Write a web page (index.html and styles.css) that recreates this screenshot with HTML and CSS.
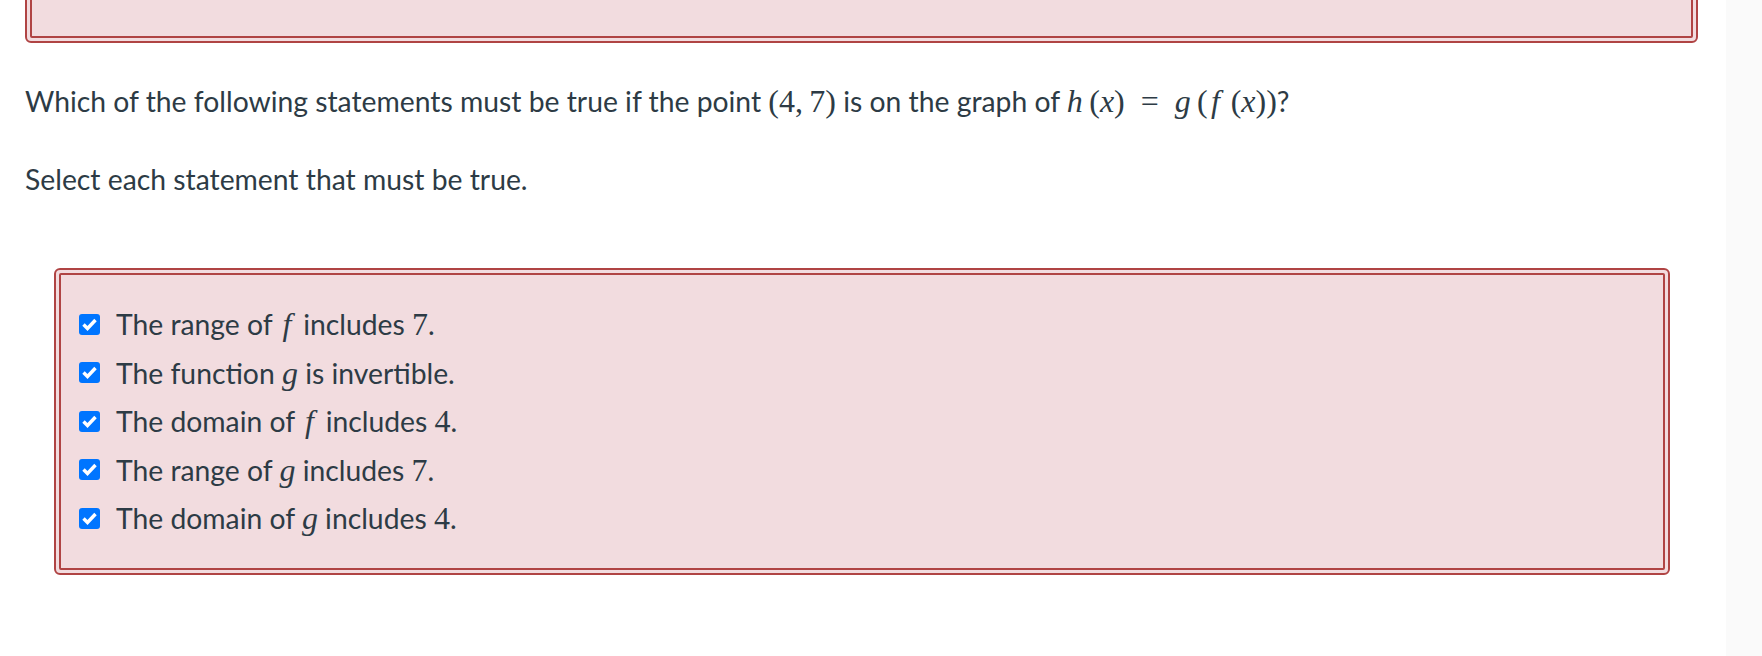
FILE: index.html
```html
<!DOCTYPE html>
<html lang="en">
<head>
    <meta charset="UTF-8">
    <meta name="viewport" content="width=device-width, initial-scale=1.0">
    <title>Question</title>
    <link rel="stylesheet" href="styles.css">
</head>
<body>
    <div class="layout">
        <div class="main">
            <!-- Caixa do enunciado anterior (cortada no topo) -->
            <div class="answer-box answer-box-top">
                <div class="answer-inner"></div>
            </div>

            <p class="question">Which of the following statements must be true if the point <span class="math">(4,&thinsp;7)</span> is on the graph of <span class="math"><i>h</i>&thinsp;(<i>x</i>)&ensp;=&ensp;<i>g</i>&thinsp;(<i class="fi">f</i>&thinsp;(<i>x</i>))</span>?</p>
            <p class="question">Select each statement that must be true.</p>

            <div class="answer-box answer-box-options">
                <div class="answer-inner">
                    <ul class="options">
                        <li class="option">
                            <span class="check"><svg viewBox="0 0 21 21" width="21" height="21"><path d="M4.5 10.5 L8.5 14.5 L16.5 6" /></svg></span>
                            <span class="label">The range of <span class="math"><i class="fi">f</i></span>&nbsp;includes <span class="math">7</span>.</span>
                        </li>
                        <li class="option">
                            <span class="check"><svg viewBox="0 0 21 21" width="21" height="21"><path d="M4.5 10.5 L8.5 14.5 L16.5 6" /></svg></span>
                            <span class="label">The function <span class="math"><i>g</i></span> is invertible.</span>
                        </li>
                        <li class="option">
                            <span class="check"><svg viewBox="0 0 21 21" width="21" height="21"><path d="M4.5 10.5 L8.5 14.5 L16.5 6" /></svg></span>
                            <span class="label">The domain of <span class="math"><i class="fi">f</i></span>&nbsp;includes <span class="math">4</span>.</span>
                        </li>
                        <li class="option">
                            <span class="check"><svg viewBox="0 0 21 21" width="21" height="21"><path d="M4.5 10.5 L8.5 14.5 L16.5 6" /></svg></span>
                            <span class="label">The range of <span class="math"><i>g</i></span> includes <span class="math">7</span>.</span>
                        </li>
                        <li class="option">
                            <span class="check"><svg viewBox="0 0 21 21" width="21" height="21"><path d="M4.5 10.5 L8.5 14.5 L16.5 6" /></svg></span>
                            <span class="label">The domain of <span class="math"><i>g</i></span> includes <span class="math">4</span>.</span>
                        </li>
                    </ul>
                </div>
            </div>
        </div>
        <div class="sidebar"></div>
    </div>
</body>
</html>
```

FILE: styles.css
```css
/* Estilos gerais */
body {
    margin: 0;
    background-color: #ffffff;
    font-family: Lato, "Liberation Sans", sans-serif;
    color: #2d3b45;
}

.layout {
    display: flex;
    height: 656px;
    overflow: hidden;
}

.main {
    width: 1726px;
    box-sizing: border-box;
    padding: 0 28px 0 25px;
}

.sidebar {
    flex: 1;
    background-color: #fafafa;
}

/* Caixas de resposta com borda dupla */
.answer-box {
    border: 2px solid #b04444;
    border-radius: 6px;
    padding: 3px;
    background-color: #f2dcdf;
}

.answer-inner {
    border: 2px solid #b04444;
    border-radius: 2px;
    background-color: #f2dcdf;
}

.answer-box-top {
    margin-top: -40px;
}

.answer-box-top .answer-inner {
    height: 69px;
}

.answer-box-options {
    margin: 68px 28px 0 29px;
}

/* Texto da pergunta */
.question {
    font-size: 28.3px;
    line-height: 42px;
    margin: 0;
}

.answer-box-top + .question {
    margin-top: 37px;
}

.question + .question {
    margin-top: 36px;
}

.math {
    font-family: "Liberation Serif", "Times New Roman", serif;
    font-size: 1.13em;
    line-height: 1;
}

.math i {
    font-style: italic;
}

.math .fi {
    margin: 0 0.14em 0 0.1em;
}

/* Lista de alternativas */
.options {
    list-style: none;
    margin: 0;
    padding: 25px 18px 25px 18px;
}

.option {
    display: flex;
    align-items: center;
    height: 48.5px;
    font-size: 28.3px;
}

.check {
    width: 21px;
    height: 21px;
    border-radius: 3px;
    background-color: #0075ff;
    margin-right: 16px;
    flex-shrink: 0;
    display: flex;
}

.check path {
    fill: none;
    stroke: #ffffff;
    stroke-width: 3.4;
}
```
